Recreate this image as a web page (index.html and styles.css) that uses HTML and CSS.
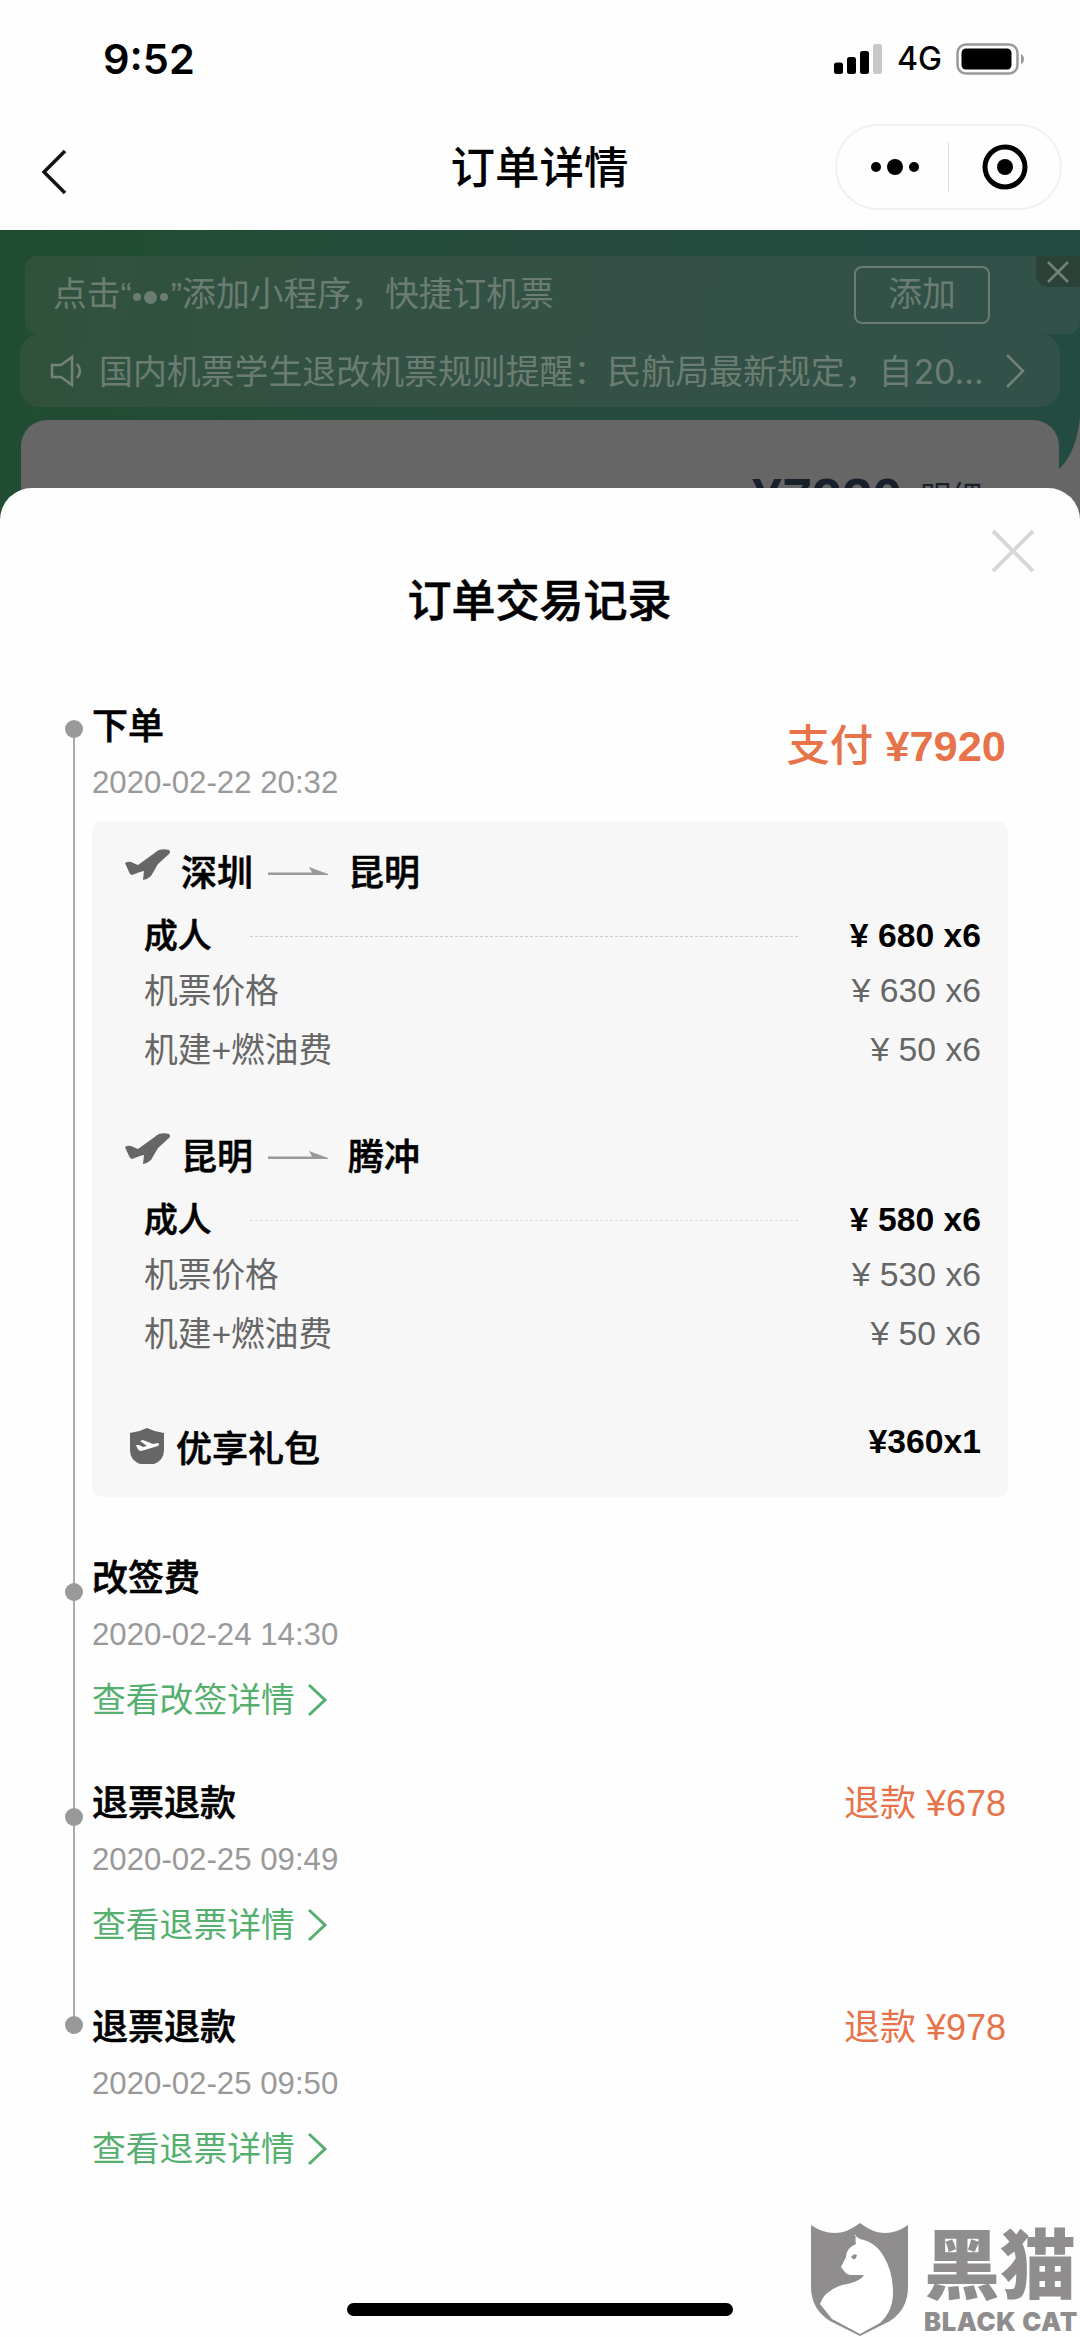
FILE: index.html
```html
<!DOCTYPE html>
<html lang="zh-CN">
<head>
    <meta charset="utf-8">
    <meta name="viewport" content="width=device-width, initial-scale=1.0, user-scalable=no">
    <title>订单详情</title>
    <link rel="stylesheet" href="styles.css">
</head>
<body>
    <div class="statusbar">
        <span class="time">9:52</span>
        <svg class="signal" width="48" height="30" viewBox="0 0 48 30">
            <rect x="0" y="18.500" width="9" height="11.500" rx="2.500"/>
            <rect x="13" y="13" width="9" height="17" rx="2.500"/>
            <rect x="26" y="7" width="9" height="23" rx="2.500"/>
            <rect x="39" y="0" width="9" height="30" rx="2.500" fill="#c8c8c8"/>
        </svg>
        <span class="network">4G</span>
        <svg class="battery" width="69" height="32" viewBox="0 0 69 32">
            <rect x="1.500" y="1.500" width="60" height="29" rx="8.500" fill="none" stroke="#999" stroke-width="2.500"/>
            <rect x="5.500" y="5.500" width="50" height="21" rx="4.500"/>
            <path d="M65 11q3 1.500 3 5t-3 5z" fill="#999"/>
        </svg>
    </div>

    <div class="navbar">
        <svg class="back" width="26" height="46" viewBox="0 0 26 46"><path d="M24 2L3 23l21 21"/></svg>
        <h1>订单详情</h1>
        <div class="capsule">
            <svg width="42" height="18" viewBox="0 0 42 18"><circle cx="5" cy="9" r="5"/><circle cx="24" cy="9" r="8"/><circle cx="43" cy="9" r="5"/></svg>
            <i></i>
            <svg width="46" height="46" viewBox="0 0 46 46"><circle cx="23" cy="23" r="20" fill="none" stroke="#000" stroke-width="5"/><circle cx="23" cy="23" r="8"/></svg>
        </div>
    </div>

    <div class="hero">
        <div class="tip">
            <span>点击“<b class="dots"><i></i><i></i><i></i></b>”添加小程序，快捷订机票</span>
            <span class="add">添加</span>
            <span class="tip-close"><svg width="22" height="22" viewBox="0 0 22 22"><path d="M1 1l20 20M21 1L1 21"/></svg></span>
        </div>
        <div class="notice">
            <svg class="horn" width="33" height="32" viewBox="0 0 33 32"><path d="M2 10h9L22 2v28L11 22H2zM27 9q6 7 0 14"/></svg>
            <p>国内机票学生退改机票规则提醒：民航局最新规定，自<span>20...</span></p>
            <svg class="more" width="20" height="36" viewBox="0 0 20 36"><path d="M2 2l16 16L2 34"/></svg>
        </div>
        <div class="order"><b>¥7920</b><span>明细 &gt;</span></div>
    </div>

    <div class="sheet">
        <svg class="close" width="44" height="44" viewBox="0 0 44 44"><path d="M2 2l40 40M42 2L2 42"/></svg>
        <h2>订单交易记录</h2>

        <div class="timeline">
            <div class="item first">
                <div class="line"><h3>下单</h3><span class="pay">支付 <b>¥7920</b></span></div>
                <p class="date">2020-02-22 20:32</p>
                <div class="fare">
                    <div class="route">
                        <svg class="plane" width="46" height="32" viewBox="0 0 46 32"><path d="M0 14q3-2 6-1l7 3L31 3q4-4 13-2 2 2 0 4L33 15 26 27q-3 3-8 4l1-9-4 1-8 3q-2 0-3-3z"/></svg>
                        <b>深圳</b>
                        <svg class="arrow" width="60" height="10" viewBox="0 0 60 10"><path d="M0 5.500h44L41 0l19 7v1H0z"/></svg>
                        <b>昆明</b>
                    </div>
                    <div class="row adult"><b>成人</b><i></i><b>¥ 680 x6</b></div>
                    <div class="row price"><span>机票价格</span><span>¥ 630 x6</span></div>
                    <div class="row tax"><span>机建+燃油费</span><span>¥ 50 x6</span></div>
                    <div class="route">
                        <svg class="plane" width="46" height="32" viewBox="0 0 46 32"><path d="M0 14q3-2 6-1l7 3L31 3q4-4 13-2 2 2 0 4L33 15 26 27q-3 3-8 4l1-9-4 1-8 3q-2 0-3-3z"/></svg>
                        <b>昆明</b>
                        <svg class="arrow" width="60" height="10" viewBox="0 0 60 10"><path d="M0 5.500h44L41 0l19 7v1H0z"/></svg>
                        <b>腾冲</b>
                    </div>
                    <div class="row adult light"><b>成人</b><i></i><b>¥ 580 x6</b></div>
                    <div class="row price"><span>机票价格</span><span>¥ 530 x6</span></div>
                    <div class="row tax"><span>机建+燃油费</span><span>¥ 50 x6</span></div>
                    <div class="gift">
                        <svg width="34" height="36" viewBox="0 0 34 36"><path d="M17 0q8 4 17 5v17q0 10-10 14H10Q0 32 0 22V5q9-1 17-5z" fill="#666"/><path d="M6 17h3l4 2 4-1-7-5 3-1 10 4 5-1q2 1 0 3l-17 5q-3 0-5-6z" fill="#fff"/></svg>
                        <b>优享礼包</b>
                        <b class="num">¥360x1</b>
                    </div>
                </div>
            </div>
            <div class="item">
                <div class="line"><h3>改签费</h3></div>
                <p class="date">2020-02-24 14:30</p>
                <a class="link">查看改签详情<svg width="20" height="34" viewBox="0 0 20 34"><path d="M2 2l16 15L2 32"/></svg></a>
            </div>
            <div class="item">
                <div class="line"><h3>退票退款</h3><span class="refund">退款 ¥678</span></div>
                <p class="date">2020-02-25 09:49</p>
                <a class="link">查看退票详情<svg width="20" height="34" viewBox="0 0 20 34"><path d="M2 2l16 15L2 32"/></svg></a>
            </div>
            <div class="item last">
                <div class="line"><h3>退票退款</h3><span class="refund">退款 ¥978</span></div>
                <p class="date">2020-02-25 09:50</p>
                <a class="link">查看退票详情<svg width="20" height="34" viewBox="0 0 20 34"><path d="M2 2l16 15L2 32"/></svg></a>
            </div>
        </div>
    </div>

    <div class="home"></div>

    <div class="watermark">
        <svg width="98" height="115" viewBox="0 0 98 115">
            <path d="M0 3q25 17 49-2q24 19 48 2v62q0 22-18 34L49 114 19 99Q0 87 0 65z" fill="#8f8d8e"/>
            <path d="M43 13l6 4q16 3 24 18 9 15 9 36 0 18-13 30L49 112 21 97 9 82q4-13 22-19 18-3 22-10l-14 0q-4-1-6-4l-3-4 5-10q0-9 10-13-1-5 0-9z" fill="#fff"/>
            <path d="M40 35q3-4 6-2-1 5-4 4z" fill="#8f8d8e"/>
        </svg>
        <div class="brand"><b>黑猫</b><span>BLACK CAT</span></div>
    </div>
</body>
</html>
```

FILE: styles.css
```css
* {box-sizing: border-box;margin: 0;padding: 0;}
body {
    position: relative;
    width: 1080px;
    height: 2337px;
    overflow: hidden;
    background: #fefefe;
    color: #000;
    font-family: "Liberation Sans", "Noto Sans CJK SC", sans-serif;
}
svg {display: block;flex: none;overflow: visible;}
h1, h2, h3 {font-weight: 500;}
h2, h3, .route b, .gift b:nth-child(2), .row b:first-child {-webkit-text-stroke: .6px #000;}

/* status bar */
.statusbar {display: flex;align-items: center;height: 118px;padding: 0 55px 0 103px;}
.time {flex: 1;font: 600 41.5px/50px Inter, sans-serif;}
.network {margin: 0 14px 0 15px;font: 500 32px/40px Inter, sans-serif;}

/* mini program nav bar */
.navbar {display: flex;align-items: center;justify-content: space-between;height: 112px;padding: 0 18px 14px 41px;}
.navbar h1 {margin: 4px 0 0 177px;font-size: 44.5px;line-height: 60px;}
.back {margin-top: 10px;fill: none;stroke: #111;stroke-width: 3.5;}
.capsule {
    display: flex;
    align-items: center;
    width: 227px;
    height: 86px;
    padding: 0 32px 0 34px;
    border: 2px solid #f1f1f1;
    border-radius: 43px;
}
.capsule i {width: 1px;height: 50px;margin: 0 33px 0 35px;background: #ddd;}

/* dimmed page under the sheet */
.hero {
    position: relative;
    height: 300px;
    padding-top: 26px;
    background: linear-gradient(100deg, #204d31 0%, #264b3d 45%, #234b41 100%);
    color: #6b7d72;
    font-size: 33.8px;
    overflow: hidden;
}
/* end of the green backdrop's curve, right edge */
.hero::after {
    content: "";
    position: absolute;
    right: 0;
    top: 188px;
    width: 22px;
    height: 112px;
    background: #666;
    clip-path: path("M22 0Q18 36 0 52V112H22z");
}
.tip {
    display: flex;
    align-items: flex-start;
    height: 78px;
    margin-left: 25px;
    padding-left: 28px;
    border-radius: 12px 0 12px 12px;
    background: rgba(110,105,105,.2);
    line-height: 77px;
}
.dots {display: inline-flex;align-items: center;gap: 3px;width: 38px;height: 24px;margin-left: 1px;vertical-align: middle;}
.dots i {flex: none;width: 8px;height: 8px;border-radius: 50%;background: #6b7d72;}
.dots i:nth-child(2) {width: 13px;height: 13px;}
.add {
    width: 136px;
    height: 58px;
    margin: 10px 46px 0 auto;
    border: 2px solid #6b7d72;
    border-radius: 8px;
    line-height: 52px;
    text-align: center;
}
.tip-close {width: 44px;height: 31px;padding: 5px 11px;border-radius: 0 0 0 12px;background: #2a4238;}
.tip-close svg, .horn, .more {fill: none;stroke: #74827a;stroke-width: 2.5;}
.notice {
    display: flex;
    align-items: center;
    height: 73px;
    margin: 0 20px 13px;
    padding: 0 35px 0 30px;
    border-radius: 20px;
    background: rgba(110,105,105,.2);
    white-space: nowrap;
}
.notice p {flex: 1;margin: -2px 0 0 16px;font-size: 33.9px;}
.notice p span {margin-left: 1px;font-family: Inter, sans-serif;}
.order {
    display: flex;
    justify-content: flex-end;
    height: 110px;
    margin: 0 21px;
    padding: 47px 50px 0 0;
    border-radius: 26px 26px 0 0;
    background: #666;
    color: #18202b;
}
.order b {font-size: 54px;line-height: 60px;}
.order span {margin-left: 18px;font-size: 31px;line-height: 62px;}

/* bottom sheet */
.sheet {
    position: relative;
    z-index: 1;
    height: 1849px;
    margin-top: -42px;
    padding: 81px 74px 0 92px;
    border-radius: 32px 32px 0 0;
    background: #fefefe;
}
.close {position: absolute;top: 41px;right: 45px;fill: none;stroke: #d8d8d8;stroke-width: 4;}
.sheet h2 {margin-left: -19px;font-size: 44px;line-height: 66px;text-align: center;}
.timeline {padding-top: 70px;}
.item {position: relative;height: 224.5px;}
.item.first {height: 852px;}
.item::before {
    content: "";
    position: absolute;
    left: -19px;
    top: 37px;
    width: 2px;
    height: 100%;
    background: #aaa;
}
.item::after {
    content: "";
    position: absolute;
    left: -27px;
    top: 26px;
    width: 18px;
    height: 18px;
    border-radius: 50%;
    background: #999;
}
.item.first::before {top: 24px;height: 864px;}
.item.first::after {top: 15px;}
.item.last::before {display: none;}
.item.last::after {top: 10px;}
.item:nth-child(3)::before {height: 209px;}
.line {display: flex;justify-content: space-between;height: 44px;}
.line h3 {font-size: 36px;line-height: 43px;}
.pay {margin: 19px 0 0 0;color: #e6734a;font-size: 43.4px;font-weight: 500;line-height: 44px;}
.refund {color: #e6734a;font-size: 36px;line-height: 43px;}
.date {margin-top: 16px;color: #999;font-size: 31.2px;line-height: 36px;}
.link {display: flex;align-items: center;margin-top: 23px;color: #55b06f;font-size: 33.8px;line-height: 48px;}
.link svg {margin-left: 12px;fill: none;stroke: #55b06f;stroke-width: 3;}

/* fare card */
.fare {
    width: 916px;
    height: 676px;
    margin-top: 20px;
    padding: 25px 27px 0 33px;
    border-radius: 10px;
    background: #f7f7f7;
}
.route {display: flex;align-items: center;height: 48px;font-size: 36px;}
.route b, .gift b, .row b:first-child {font-weight: 500;}
.plane {margin: -11px 10px 0 0;fill: #666;}
.arrow {margin: 4px 20px 0 15px;fill: #999;}
.row {display: flex;align-items: center;justify-content: space-between;padding-left: 19px;color: #666;font-size: 33.7px;}
.row b {color: #000;}
.row > :first-child {margin-top: -2px;}
.row > :last-child {margin-top: 2px;}
.adult {height: 80px;}
.adult i {flex: 1;height: 0;margin: 4px 52px 0 39px;border-top: 1px dashed #ccc;}
.adult.light i {border-color: #ddd;}
.price {height: 30px;}
.tax {height: 88px;margin-bottom: 38px;}
.gift {display: flex;align-items: center;height: 48px;padding-left: 5px;margin-top: 46px;font-size: 36px;}
.gift b {margin-left: 12px;}
.gift .num {margin: -10px 0 0 auto;font-size: 33.7px;font-weight: 700;}

.home {position: absolute;z-index: 2;left: 347px;top: 2303px;width: 386px;height: 13px;border-radius: 7px;background: #000;}

.watermark {position: absolute;z-index: 2;left: 811px;top: 2222px;display: flex;color: #8f8d8e;}
.brand {margin-left: 15px;}
.brand b {display: block;font-size: 76px;font-weight: 900;line-height: 90px;}
.brand span {display: block;font: 900 25.5px/20px Inter, sans-serif;letter-spacing: .7px;white-space: nowrap;}
```
